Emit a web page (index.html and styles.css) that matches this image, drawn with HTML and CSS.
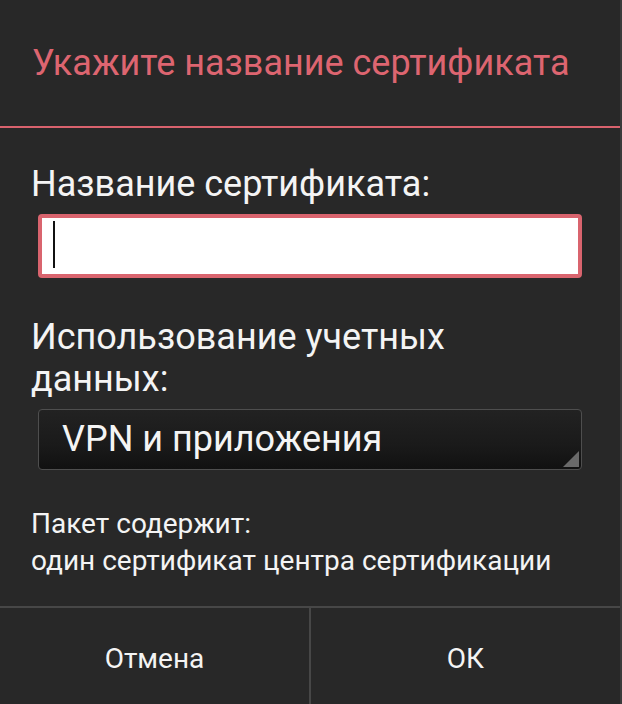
FILE: index.html
```html
<!DOCTYPE html>
<html lang="ru">
<head>
<meta charset="utf-8">
<title>Укажите название сертификата</title>
<link rel="stylesheet" href="styles.css">
</head>
<body>
<div class="dialog">
  <div class="title">Укажите название сертификата</div>
  <div class="title-rule"></div>
  <div class="content">
    <div class="label">Название сертификата:</div>
    <div class="input"><span class="cursor"></span></div>
    <div class="label label-usage">Использование учетных данных:</div>
    <div class="spinner">
      <span class="spinner-text">VPN и приложения</span>
      <span class="spinner-corner"></span>
    </div>
    <div class="info">
      <div>Пакет содержит:</div>
      <div>один сертификат центра сертификации</div>
    </div>
  </div>
  <div class="buttons">
    <div class="btn">Отмена</div>
    <div class="btn">ОК</div>
  </div>
</div>
</body>
</html>
```
FILE: styles.css
```css
html, body {
  margin: 0;
  padding: 0;
}
body {
  background: #3a3a3a;
  width: 622px;
  height: 704px;
  overflow: hidden;
  font-family: Roboto, "Noto Sans", sans-serif;
}
.dialog {
  width: 620px;
  height: 704px;
  background: #282828;
  display: flex;
  flex-direction: column;
}
.title {
  height: 126px;
  box-sizing: border-box;
  padding: 0 0 1px 32px;
  display: flex;
  align-items: center;
  color: #dd6570;
  font-size: 36px;
  line-height: 42px;
}
.title-rule {
  height: 2px;
  background: #d9626d;
}
.content {
  flex: 1;
  padding: 36px 38px 0 31px;
  color: #f4f4f4;
}
.label {
  font-size: 36px;
  line-height: 40px;
}
.input {
  margin: 10px 0 0 7px;
  height: 64px;
  box-sizing: border-box;
  background: #fff;
  border: 4px solid #d9646e;
  border-radius: 4px;
  padding: 3px 0 0 11px;
}
.cursor {
  display: block;
  width: 1.5px;
  height: 47px;
  background: #111;
}
.label-usage {
  margin-top: 38px;
  width: 470px;
  line-height: 42px;
}
.spinner {
  margin: 9px 0 0 7px;
  height: 61px;
  box-sizing: border-box;
  border: 1px solid #4e4e4e;
  border-radius: 4px;
  background: linear-gradient(#222 0%, #1a1a1a 60%, #111 100%);
  position: relative;
  display: flex;
  align-items: center;
  padding: 0 0 2px 23px;
}
.spinner-text {
  font-size: 36px;
  line-height: 42px;
  color: #f4f4f4;
}
.spinner-corner {
  position: absolute;
  right: 2px;
  bottom: 2px;
  width: 0;
  height: 0;
  border-left: 16px solid transparent;
  border-bottom: 16px solid #6a6a6a;
}
.info {
  margin-top: 35px;
  font-size: 28px;
  line-height: 37px;
}
.buttons {
  height: 96px;
  border-top: 2px solid #474747;
  display: flex;
}
.btn {
  flex: 1;
  display: flex;
  align-items: center;
  justify-content: center;
  padding-top: 4px;
  color: #f4f4f4;
  font-size: 28px;
}
.btn + .btn {
  border-left: 2px solid #474747;
}
```
